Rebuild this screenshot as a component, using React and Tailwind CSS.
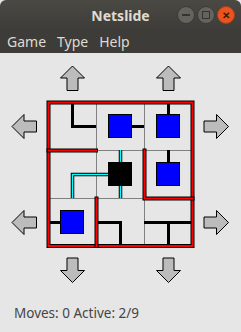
import React from "react";

function Up({ x }) {
  const pts = `${x},66 ${x + 12},78 ${x + 5.5},78 ${x + 5.5},90.5 ${x - 5.5},90.5 ${x - 5.5},78 ${x - 12},78`;
  return <polygon points={pts} fill="#bcbcbc" stroke="#000" strokeWidth="1" strokeLinejoin="miter" />;
}
function Down({ x }) {
  const pts = `${x},282.5 ${x + 12},270.5 ${x + 5.5},270.5 ${x + 5.5},258 ${x - 5.5},258 ${x - 5.5},270.5 ${x - 12},270.5`;
  return <polygon points={pts} fill="#bcbcbc" stroke="#000" strokeWidth="1" />;
}
function Left({ y }) {
  const pts = `12,${y} 24,${y - 12} 24,${y - 5.5} 36.5,${y - 5.5} 36.5,${y + 5.5} 24,${y + 5.5} 24,${y + 12}`;
  return <polygon points={pts} fill="#bcbcbc" stroke="#000" strokeWidth="1" />;
}
function Right({ y }) {
  const pts = `228.5,${y} 216.5,${y - 12} 216.5,${y - 5.5} 204,${y - 5.5} 204,${y + 5.5} 216.5,${y + 5.5} 216.5,${y + 12}`;
  return <polygon points={pts} fill="#bcbcbc" stroke="#000" strokeWidth="1" />;
}

function Wall({ d }) {
  return (
    <>
      <path d={d} stroke="#000" strokeWidth="4" fill="none" strokeLinecap="square" />
      <path d={d} stroke="#ff0000" strokeWidth="2" fill="none" strokeLinecap="square" />
    </>
  );
}

function Board() {
  const wires = [
    "M72.5 102 V126.5 H96",
    "M132 126.5 H144",
    "M168.5 102 V114",
    "M168.5 150 V162",
    "M48 222.5 H60",
    "M96 222.5 H120.5 V246",
    "M144 222.5 H192 M168.5 222.5 V246",
  ];
  const cyan = "M72.5 198 V174.5 H108 M120.5 150 V162 M120.5 186 V198";
  return (
    <svg width="241" height="240" viewBox="0 53 241 240" className="block">
      <rect x="0" y="53" width="241" height="240" fill="#e6e6e6" />
      <path d="M96.5 102 V246 M144.5 102 V246 M48 150.5 H192 M48 198.5 H192" stroke="#808080" strokeWidth="1" fill="none" />
      {wires.map((d, i) => (
        <path key={i} d={d} stroke="#000" strokeWidth="3" fill="none" strokeLinecap="butt" strokeLinejoin="miter" />
      ))}
      <path d={cyan} stroke="#000" strokeWidth="3.5" fill="none" strokeLinejoin="miter" />
      <path d={cyan} stroke="#00ffff" strokeWidth="1.5" fill="none" strokeLinejoin="miter" />
      <rect x="108.5" y="114.5" width="23" height="23" fill="#0000ff" stroke="#000" strokeWidth="1" />
      <rect x="156.5" y="114.5" width="23" height="23" fill="#0000ff" stroke="#000" strokeWidth="1" />
      <rect x="156.5" y="162.5" width="23" height="23" fill="#0000ff" stroke="#000" strokeWidth="1" />
      <rect x="60.5" y="210.5" width="23" height="23" fill="#0000ff" stroke="#000" strokeWidth="1" />
      <rect x="108" y="162" width="24" height="24" fill="#000" />
      <Wall d="M48.5 102.5 H192.5 V246 H48.5 Z" />
      <Wall d="M48.5 150.5 H96" />
      <Wall d="M144.5 150.5 V198.5 H192.5" />
      <Wall d="M96.5 198.5 V246" />
      <Up x={72.5} />
      <Up x={168.5} />
      <Down x={72.5} />
      <Down x={168.5} />
      <Left y={126.5} />
      <Left y={222.5} />
      <Right y={126.5} />
      <Right y={222.5} />
    </svg>
  );
}

export default function App() {
  return (
    <div
      className="w-[241px] h-[332px] overflow-hidden bg-[#e6e6e6] flex flex-col"
      style={{ fontFamily: '"Noto Sans", "Open Sans", sans-serif' }}
    >
      <div className="h-[30px] rounded-t-[6px] bg-gradient-to-b from-[#4a4944] to-[#3d3c38] flex items-center relative">
        <div className="flex-1 text-center text-[14px] font-bold text-[#dfdbd2]">Netslide</div>
        <div className="absolute right-[6px] top-[6px] flex gap-[2px]">
          <div className="w-[18px] h-[18px] rounded-full bg-[#64635e] border border-[#3a3935] flex items-center justify-center">
            <div className="w-[8px] h-[2px] bg-[#35342f]" />
          </div>
          <div className="w-[18px] h-[18px] rounded-full bg-[#64635e] border border-[#3a3935] flex items-center justify-center">
            <div className="w-[8px] h-[8px] border-[1.5px] border-[#35342f]" />
          </div>
          <div className="w-[18px] h-[18px] rounded-full bg-[#e9541f] border border-[#a8401a] flex items-center justify-center text-[#3a1a0c] text-[10px] font-bold leading-none">
            ✕
          </div>
        </div>
      </div>
      <div className="h-[23px] bg-[#3d3c38] flex items-start gap-[11px] pl-[7px] pt-[3px] text-[14px] text-[#dfdbd2] leading-[18px]">
        <span>Game</span>
        <span>Type</span>
        <span>Help</span>
      </div>
      <Board />
      <div className="pl-[14px] pt-[11px] text-[13.5px] text-[#454545] leading-[18px]">Moves: 0 Active: 2/9</div>
    </div>
  );
}
